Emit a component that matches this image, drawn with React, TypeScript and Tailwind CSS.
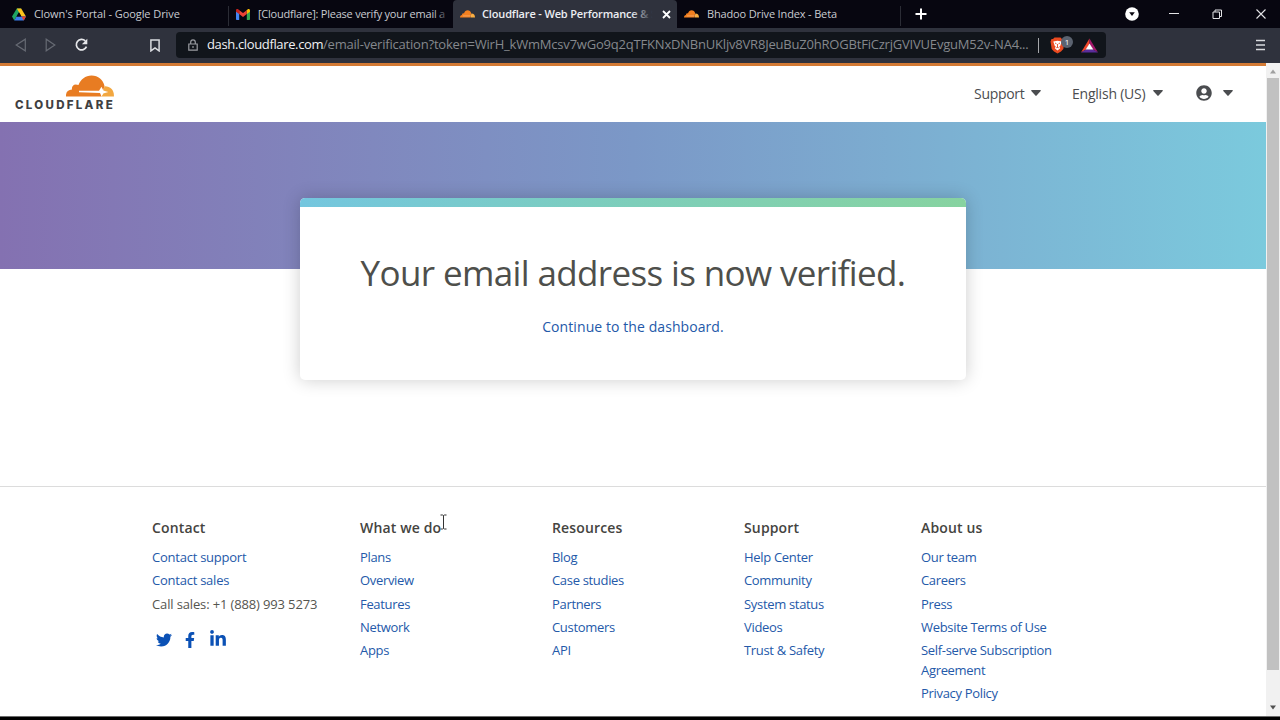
import type { ReactNode } from 'react';
import { FaFacebookF, FaLinkedinIn, FaTwitter, FaUserCircle } from 'react-icons/fa';

type FooterColumn = {
  title: string;
  width: string;
  links: string[];
};

const columns: FooterColumn[] = [
  { title: 'What we do', width: 'w-48', links: ['Plans', 'Overview', 'Features', 'Network', 'Apps'] },
  { title: 'Resources', width: 'w-48', links: ['Blog', 'Case studies', 'Partners', 'Customers', 'API'] },
  {
    title: 'Support',
    width: 'w-[177px]',
    links: ['Help Center', 'Community', 'System status', 'Videos', 'Trust & Safety'],
  },
  {
    title: 'About us',
    width: 'w-[145px]',
    links: [
      'Our team',
      'Careers',
      'Press',
      'Website Terms of Use',
      'Self-serve Subscription Agreement',
      'Privacy Policy',
    ],
  },
];

function DriveIcon() {
  return (
    <svg width="14" height="13" viewBox="0 0 14 13" className="shrink-0">
      <path d="M4.8 0.5h4.4L4.5 8.6 2.3 12.4 0 8.6z" fill="#1fa463" />
      <path d="M4.8 0.5h4.4L14 8.6H9.5z" fill="#fbc31c" />
      <path d="M4.5 8.6H14l-2.3 3.9H2.3z" fill="#3b7ded" />
      <path d="M9.5 8.6H14l-2.3 3.9z" fill="#e5402f" />
      <path d="M7 4.5L9.4 8.6H4.6z" fill="#0b0912" />
    </svg>
  );
}

function GmailIcon() {
  return (
    <svg width="14" height="11" viewBox="0 0 14 11" className="shrink-0">
      <path d="M0 2v8.2c0 .5.3.8.8.8h2.4V4.2z" fill="#4285f4" />
      <path d="M14 2v8.2c0 .5-.3.8-.8.8h-2.4V4.2z" fill="#34a853" />
      <path d="M10.8 1.2v3.9L14 2.7V1.5C14 .1 12.5-.4 11.5.5z" fill="#fbbc04" />
      <path d="M3.2 1.2L7 4l3.8-2.8v3.9L7 8 3.2 5.1z" fill="#ea4335" />
      <path d="M0 1.5v1.2l3.2 2.4V1.2L2.5.6C1.4-.3 0 .1 0 1.5z" fill="#c5221f" />
    </svg>
  );
}

function CloudIcon() {
  return (
    <svg width="15" height="8" viewBox="0 0 15 8" className="shrink-0">
      <path d="M0 7.5C0 6 .8 5 2 4.9 2 3.6 3 3 4 3.4 4.6 1.4 6 .3 7.6.3c1.8 0 3.2 1.2 3.5 3L10.5 7.5z" fill="#f38020" />
      <path d="M10.6 7.5l.7-3.9C13.5 3.4 15 5 15 7.5z" fill="#faae40" />
      <path d="M3 5.9h8.500" stroke="#fff" strokeOpacity=".45" strokeWidth=".6" />
    </svg>
  );
}

function Caret() {
  return (
    <svg width="10" height="6" viewBox="0 0 10 6" className="shrink-0">
      <path d="M.8 0h8.4c.6 0 .9.6.5 1L5.6 5.6a.8.8 0 0 1-1.2 0L.3 1C-.1.6.2 0 .8 0z" fill="#4b4d50" />
    </svg>
  );
}

function CloudflareLogo() {
  return (
    <div className="mb-[2px] flex w-[104px] flex-col">
      <svg width="48" height="22" viewBox="0 0 48 22" className="ml-[51px]">
        <path
          d="M0 21.5c-.4-4.2 2-6.6 6-6.9-.7-4 2.5-6.5 6.5-4.5C14.5 4.5 19.5.5 25.5.5c6.8 0 11.7 4.4 13 10.6L35.5 21.5z"
          fill="#e87c22"
        />
        <path d="M35.5 21.5l3-10.3c5.6-.3 9.8 3.6 9.4 10.3z" fill="#f2a740" />
        <path d="M13 15.8h20l2.5-4 1.8 3.6 5 1.6-5 1.4-1.7 3.1-1.6-3.6-21-.6z" fill="#fff" />
      </svg>
      <span className="mt-px whitespace-nowrap font-[Inter,sans-serif] text-[11.5px] font-extrabold leading-[14px] tracking-[2.3px] text-[#404041]">
        CLOUDFLARE
      </span>
    </div>
  );
}

function Tab({ icon, title, tracking }: { icon: ReactNode; title: string; tracking: string }) {
  return (
    <div className="flex h-7 w-full items-center gap-2 overflow-hidden">
      {icon}
      <span className={`whitespace-nowrap text-[11px] leading-4 text-[#c9cbd0] ${tracking}`}>{title}</span>
    </div>
  );
}

function TabStrip() {
  return (
    <div className="flex h-7 items-center bg-[#070610]">
      <div className="w-[228px] pl-3">
        <Tab icon={<DriveIcon />} title="Clown's Portal - Google Drive" tracking="tracking-[-0.07px]" />
      </div>
      <div className="mt-1 h-5 w-px bg-[#2b2c35]" />
      <div className="relative w-[224px] pl-[7px]">
        <Tab icon={<GmailIcon />} title="[Cloudflare]: Please verify your email a" tracking="tracking-[-0.23px]" />
        <div className="absolute right-0 top-0 h-7 w-5 bg-linear-to-r from-transparent to-[#070610] to-90%" />
      </div>
      <div className="flex h-7 w-56 items-center rounded-t bg-[#2f323d] pl-[7px]">
        <div className="relative w-[195px]">
          <div className="flex items-center gap-[7px] overflow-hidden">
            <CloudIcon />
            <span className="whitespace-nowrap text-[11px] font-semibold leading-4 tracking-[-0.15px] text-[#eceef2]">
              Cloudflare - Web Performance & S
            </span>
          </div>
          <div className="absolute right-0 top-0 h-4 w-6 bg-linear-to-r from-transparent to-[#2f323d] to-90%" />
        </div>
        <svg width="9" height="9" viewBox="0 0 9 9" className="ml-[7px]">
          <path d="M1 1l7 7M8 1L1 8" stroke="#fff" strokeWidth="1.8" />
        </svg>
      </div>
      <div className="w-[223px] pl-[7px]">
        <Tab icon={<CloudIcon />} title="Bhadoo Drive Index - Beta" tracking="tracking-[-0.15px]" />
      </div>
      <div className="mt-1 h-5 w-px bg-[#2b2c35]" />
      <svg width="12" height="12" viewBox="0 0 12 12" className="ml-[14px]">
        <path d="M6 .5v11M.5 6h11" stroke="#fff" strokeWidth="2" />
      </svg>
      <div className="ml-auto flex items-center pr-[14px]">
        <svg width="14" height="14" viewBox="0 0 14 14">
          <circle cx="7" cy="7" r="6.8" fill="#fff" />
          <path d="M4.2 5.2h5.6L7 9z" fill="#0b0912" />
        </svg>
        <svg width="10" height="10" viewBox="0 0 10 10" className="ml-[30px]">
          <path d="M0 4.5h10" stroke="#e3e3e6" />
        </svg>
        <svg width="11" height="11" viewBox="0 0 11 11" className="ml-[33px]" fill="none" stroke="#e3e3e6">
          <path d="M1 3h6.5v6.5H1zM3 3V1h6.5v6.5h-2" />
        </svg>
        <svg width="10" height="10" viewBox="0 0 10 10" className="ml-[33px]">
          <path d="M.5.5l9 9M9.5.5l-9 9" stroke="#e3e3e6" strokeWidth="1.1" />
        </svg>
      </div>
    </div>
  );
}

function AddressBar() {
  return (
    <div className="ml-4 flex h-[26px] w-[930px] items-center rounded-sm bg-[#11151b] pl-3">
      <svg width="10" height="12" viewBox="0 0 10 12" fill="none" stroke="#9a9ca1" strokeWidth="1.2">
        <path d="M.8 5h8.4v6.2H.8zM2.7 5V3.2a2.3 2.3 0 0 1 4.6 0V5M5 7v2" />
      </svg>
      <span className="ml-[9px] flex w-[822px] whitespace-nowrap text-[13px] text-[#85888d]">
        <span className="w-[116px] tracking-[-0.36px] text-[#f0f1f3]">dash.cloudflare.com</span>
        <span className="tracking-[-0.2px]">
          /email-verification?token=WirH_kWmMcsv7wGo9q2qTFKNxDNBnUKljv8VR8JeuBuZ0hROGBtFiCzrjGVIVUEvguM52v-NA4...
        </span>
      </span>
      <div className="ml-[9px] h-[15px] w-px bg-[#a5a7ab]" />
      <div className="relative ml-[11px]">
        <svg width="15" height="17" viewBox="0 0 15 17">
          <path d="M4.5.5h6l1.5 1.5h1.5l1 2.5-1.2 7.5-2.3 2.5-3.5 2-3.5-2L1.7 12 .5 4.5l1-2.5H3z" fill="#ea4a20" />
          <path d="M3.3 4.5L7.5 3.8l4.2.7-1.5 4.5-1 .6 1 1.6-2.7 2.2-2.7-2.2 1-1.6-1-.6z" fill="#fff" />
          <path d="M5 6l1.5.8M10 6l-1.5.8M7.5 7v3M6.3 10.8l1.2-.6 1.2.6" stroke="#ea4a20" strokeWidth=".9" />
        </svg>
        <span className="absolute -top-px left-[11px] flex h-3 w-3 items-center justify-center rounded-md bg-[#5b6370] text-[8px] leading-none text-white">
          1
        </span>
      </div>
      <svg width="17" height="15" viewBox="0 0 17 15" className="ml-4">
        <path d="M8.5.5L0 14.5l5.2-3.2 3.3-5z" fill="#f1472a" />
        <path d="M8.5.5L17 14.5l-5.2-3.2-3.3-5z" fill="#a3186c" />
        <path d="M0 14.5h17l-5.2-3.2H5.2z" fill="#5b2d9b" />
        <path d="M8.5 5.5l3.8 6H4.7z" fill="#fff" />
      </svg>
    </div>
  );
}

function Toolbar() {
  return (
    <div className="flex h-[35px] items-center bg-[#2f323d] pb-px pl-[15px] pr-[15px]">
      <svg width="12" height="14" viewBox="0 0 12 14" fill="none" stroke="#666a73" strokeWidth="1.2">
        <path d="M10.3 1.2v11.6L1.2 7z" />
      </svg>
      <svg width="12" height="14" viewBox="0 0 12 14" fill="none" stroke="#666a73" strokeWidth="1.2" className="ml-[18px]">
        <path d="M1.2 1.2v11.6L9.8 7z" />
      </svg>
      <svg width="15" height="14" viewBox="0 0 15 14" className="ml-[17px]">
        <path d="M11.3 2.8A5.3 5.3 0 1 0 12.5 8.7" fill="none" stroke="#e6e7ea" strokeWidth="1.7" />
        <path d="M13.3.8v5.4H7.9z" fill="#e6e7ea" />
      </svg>
      <svg width="10" height="13" viewBox="0 0 10 13" fill="none" stroke="#d9dbdf" strokeWidth="1.5" className="ml-[61px]">
        <path d="M.9.9h8.2v11L5 8.9.9 11.900z" />
      </svg>
      <AddressBar />
      <svg width="9" height="12" viewBox="0 0 9 12" className="ml-auto">
        <path d="M0 1.5h9M0 6h9M0 10.5h9" stroke="#d9dbdf" strokeWidth="1.6" />
      </svg>
    </div>
  );
}

function SiteHeader() {
  return (
    <header className="flex h-[59px] items-center border-t-[3px] border-[#d37a34] pl-[15px] pr-[33px]">
      <CloudflareLogo />
      <nav className="mb-[2px] ml-auto flex items-center text-[14px] text-[#4b4d50]">
        <span className="w-[51px] whitespace-nowrap tracking-[-0.3px]">Support</span>
        <span className="ml-[6px]"><Caret /></span>
        <span className="ml-[31px] w-[75px] whitespace-nowrap tracking-[-0.22px]">English (US)</span>
        <span className="ml-[6px]"><Caret /></span>
        <FaUserCircle size={16} className="ml-[33px]" />
        <span className="ml-[11px]"><Caret /></span>
      </nav>
    </header>
  );
}

function VerifiedBanner() {
  return (
    <section className="h-[365px] border-b border-[#dcdcdc]">
      <div className="flex h-[147px] items-start justify-center bg-linear-to-r from-[#8471b1] via-[#7b98c7] to-[#7bcadd] pt-[76px]">
        <div className="w-[666px] overflow-hidden rounded-[5px] bg-white shadow-[0_0_18px_rgba(0,0,0,0.2)]">
          <div className="h-[9px] bg-linear-to-r from-[#74c6df] via-[#7dceba] to-[#87d3a0]" />
          <div className="flex h-[173px] flex-col items-center pt-[42px]">
            <h1 className="whitespace-nowrap text-[35px] leading-[48px] tracking-[-0.63px] text-[#4e4f4b]">
              Your email address is now verified.
            </h1>
            <a className="mt-5 whitespace-nowrap text-[14px] leading-5 tracking-[0.08px] text-[#2459a9]">
              Continue to the dashboard.
            </a>
          </div>
        </div>
      </div>
    </section>
  );
}

function ColumnTitle({ children }: { children: ReactNode }) {
  return <h2 className="text-[14px] font-semibold leading-5 tracking-[0.15px] text-[#45443f]">{children}</h2>;
}

function SiteFooter() {
  return (
    <footer className="flex pl-[152px] pt-[31px] text-[13px] leading-5 tracking-[-0.32px] text-[#2459a9]">
      <div className="w-52">
        <ColumnTitle>Contact</ColumnTitle>
        <ul className="mt-[9px] flex flex-col gap-[3.4px] whitespace-nowrap">
          <li className="tracking-[-0.24px]">Contact support</li>
          <li className="tracking-[-0.24px]">Contact sales</li>
          <li className="tracking-[-0.14px] text-[#55554f]">Call sales: +1 (888) 993 5273</li>
        </ul>
        <div className="mt-[16px] flex items-center pl-1 text-[#0b51b5]">
          <FaTwitter size={16} />
          <FaFacebookF size={16} className="ml-[10px]" />
          <FaLinkedinIn size={18} className="mb-[3px] ml-[11px]" />
        </div>
      </div>
      {columns.map((col) => (
        <div key={col.title} className={col.width}>
          <ColumnTitle>{col.title}</ColumnTitle>
          <ul className="mt-[9px] flex flex-col gap-[3.3px]">
            {col.links.map((link) => (
              <li key={link}>{link}</li>
            ))}
          </ul>
        </div>
      ))}
    </footer>
  );
}

function Scrollbar() {
  return (
    <div className="flex w-[14px] flex-col items-center bg-[#f1f1f1]">
      <svg width="8" height="5" viewBox="0 0 8 5" className="mt-[6px] shrink-0">
        <path d="M4 .5L7 4.5H1z" fill="#a0a0a0" />
      </svg>
      <div className="mt-1 h-[592px] w-3 bg-[#c1c1c1]" />
      <svg width="8" height="5" viewBox="0 0 8 5" className="mt-auto mb-[6px] shrink-0">
        <path d="M4 4.5L7 .5H1z" fill="#505050" />
      </svg>
    </div>
  );
}

export default function App() {
  return (
    <div className="relative flex h-[720px] w-[1280px] flex-col overflow-hidden bg-white font-['Open_Sans','Noto_Sans',sans-serif]">
      <TabStrip />
      <Toolbar />
      <div className="flex h-[653px] overflow-hidden">
        <main className="w-[1266px]">
          <SiteHeader />
          <VerifiedBanner />
          <SiteFooter />
        </main>
        <Scrollbar />
      </div>
      <div className="flex-1 border-t border-[#6c6c6c] bg-black" />
      {/* text cursor */}
      <svg width="7" height="16" viewBox="0 0 7 16" className="absolute left-[440px] top-[514px]">
        <path d="M.5 1h2l1 .5 1-.5h2M3.5 1.5v13M.5 15h2l1-.5 1 .5h2" fill="none" stroke="#333" />
      </svg>
    </div>
  );
}
